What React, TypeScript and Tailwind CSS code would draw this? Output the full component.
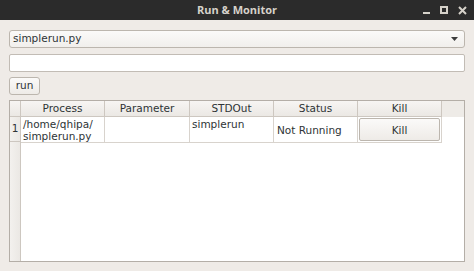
import React from "react";

const font = { fontFamily: '"DejaVu Sans", "Liberation Sans", sans-serif' };

export default function App() {
  return (
    <div className="w-[474px] h-[271px] bg-[#efebe7] flex flex-col overflow-hidden text-[10.5px] text-[#2e3436]" style={font}>
      {/* Title bar */}
      <div className="h-[20px] bg-[#2b2b2b] relative flex items-center justify-center shrink-0">
        <span className="font-bold text-[11px] text-[#d6d2ca]" style={{ fontFamily: '"Open Sans", sans-serif' }}>
          Run &amp; Monitor
        </span>
        <div className="absolute right-[7px] top-0 h-full flex items-center gap-[10px]">
          <div className="w-[7px] h-[2px] bg-[#d6d2ca] mt-[6px]" />
          <div className="w-[8px] h-[8px] border-2 border-[#d6d2ca]" />
          <svg width="9" height="9" viewBox="0 0 9 9">
            <path d="M1 1 L8 8 M8 1 L1 8" stroke="#d6d2ca" strokeWidth="2" />
          </svg>
        </div>
      </div>

      {/* Content */}
      <div className="flex-1 flex flex-col px-[9px] pt-[10px] pb-[9px]">
        {/* Combo box */}
        <div className="h-[18px] border border-[#bcb6ae] rounded-[3px] bg-gradient-to-b from-[#fbfaf9] to-[#f1efec] flex items-center justify-between pl-[3px] pr-[6px]">
          <span>simplerun.py</span>
          <svg width="7" height="4" viewBox="0 0 7 4">
            <path d="M0 0 L7 0 L3.5 4 Z" fill="#3c3c3c" />
          </svg>
        </div>

        {/* Line edit */}
        <div className="h-[18px] mt-[6px] border border-[#c2bcb5] rounded-[2px] bg-white" />

        {/* Run button */}
        <div className="mt-[5px] flex">
          <div className="h-[18px] w-[31px] border border-[#bcb6ae] rounded-[3px] bg-gradient-to-b from-[#fbfaf9] to-[#eeebe7] flex items-center justify-center">
            run
          </div>
        </div>

        {/* Table */}
        <div className="mt-[5px] flex-1 border border-[#b4aea7] bg-white flex flex-col">
          <div className="h-[16px] grid grid-cols-[11px_84px_85px_84px_84px_84px_1fr] bg-gradient-to-b from-[#f7f5f3] to-[#ebe8e4] border-b border-[#cdc7c0]">
            <div className="border-r border-[#cdc7c0]" />
            <div className="border-r border-[#cdc7c0] flex items-center justify-center">Process</div>
            <div className="border-r border-[#cdc7c0] flex items-center justify-center">Parameter</div>
            <div className="border-r border-[#cdc7c0] flex items-center justify-center">STDOut</div>
            <div className="border-r border-[#cdc7c0] flex items-center justify-center">Status</div>
            <div className="border-r border-[#cdc7c0] flex items-center justify-center">Kill</div>
            <div className="bg-[#eeebe7]" />
          </div>
          <div className="flex-1 grid grid-cols-[11px_1fr]">
            <div className="bg-gradient-to-r from-[#f3f1ee] to-[#ebe8e4] border-r border-[#cdc7c0] flex flex-col">
              <div className="h-[25px] border-b border-[#cdc7c0] flex items-center justify-center">1</div>
            </div>
            <div className="flex flex-col">
              <div className="h-[25px] grid grid-cols-[84px_85px_84px_84px_84px] leading-[12px]">
                <div className="border-r border-b border-[#d8d3cd] pl-[2px] pt-[1px]">
                  /home/qhipa/
                  <br />
                  simplerun.py
                </div>
                <div className="border-r border-b border-[#d8d3cd]" />
                <div className="border-r border-b border-[#d8d3cd] pl-[2px] pt-[1px]">simplerun</div>
                <div className="border-r border-b border-[#d8d3cd] pl-[3px] flex items-center">Not Running</div>
                <div className="border-r border-b border-[#d8d3cd] p-[1px]">
                  <div className="h-full border border-[#bcb6ae] rounded-[2px] bg-gradient-to-b from-[#fbfaf9] to-[#eeebe7] flex items-center justify-center">
                    Kill
                  </div>
                </div>
              </div>
            </div>
          </div>
        </div>
      </div>
    </div>
  );
}
